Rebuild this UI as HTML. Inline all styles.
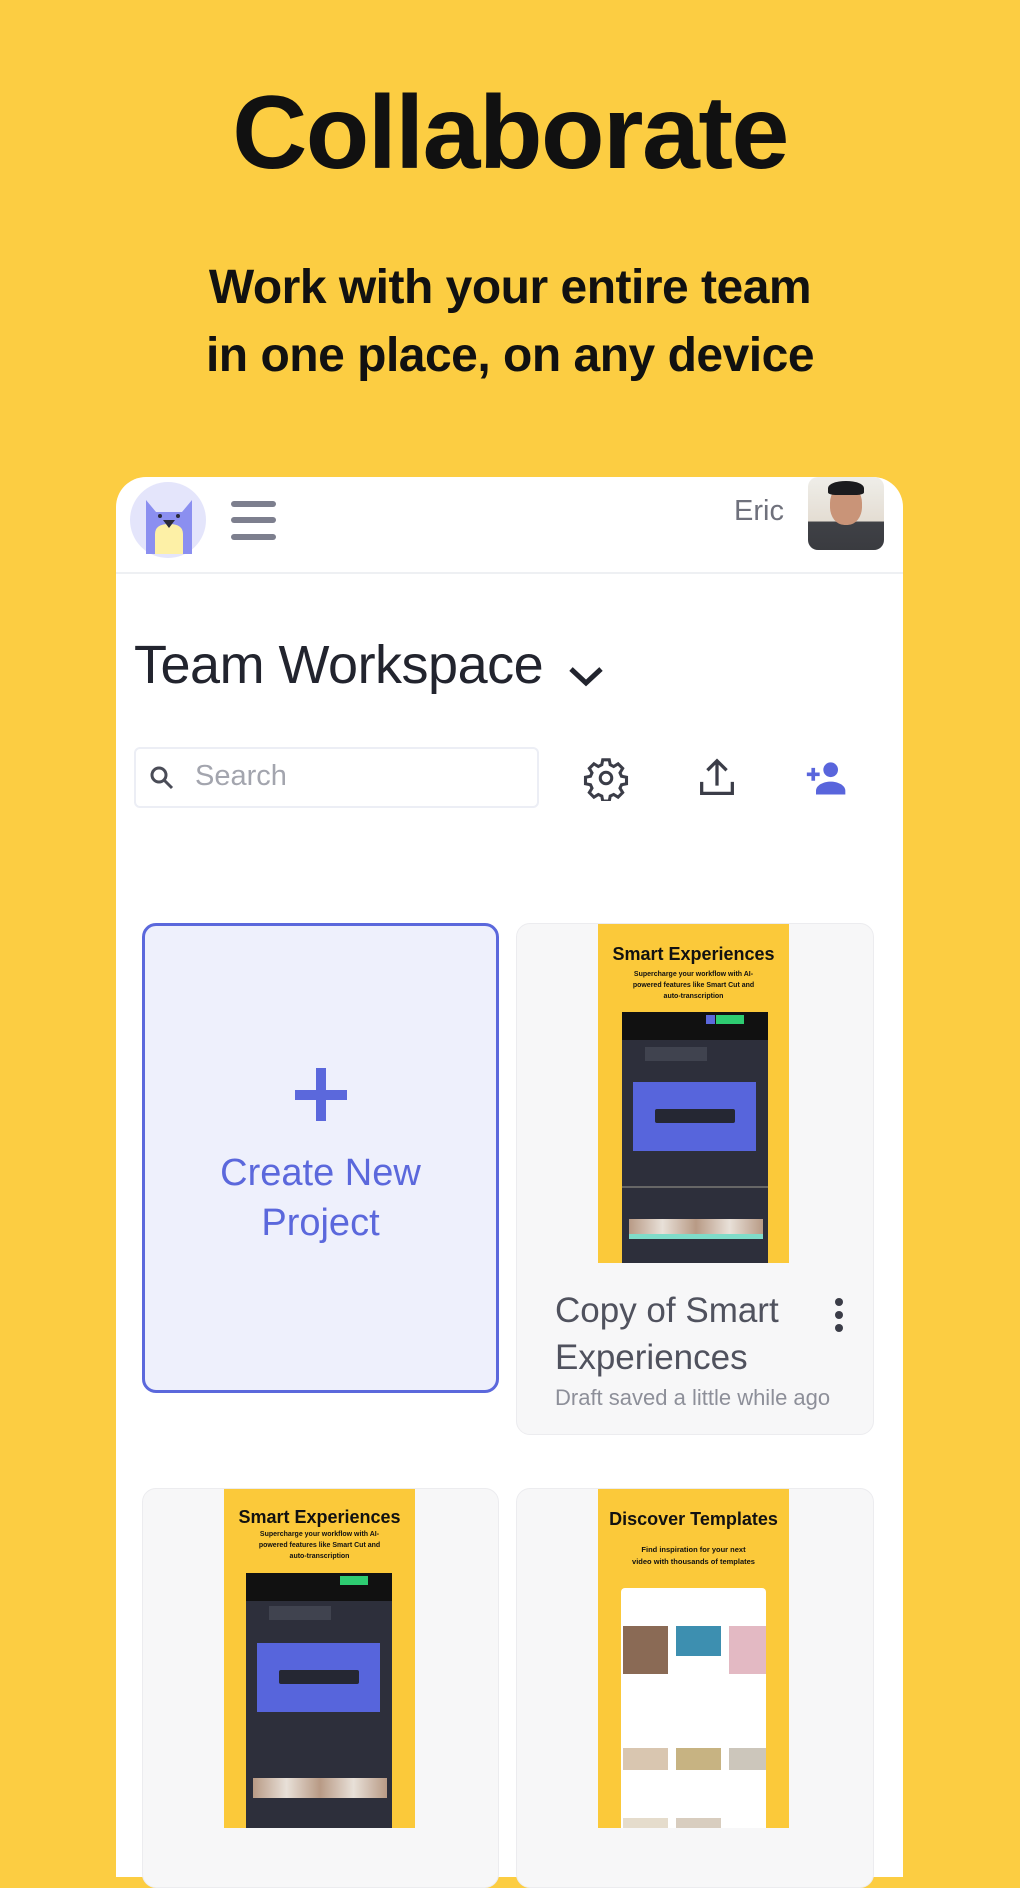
<!DOCTYPE html>
<html><head><meta charset="utf-8"><style>
*{margin:0;padding:0;box-sizing:border-box}
body{width:1020px;height:1813px;background:#fccd42;font-family:"Liberation Sans",sans-serif;position:relative;overflow:hidden}
.abs{position:absolute}
h1{position:absolute;left:0;width:1020px;text-align:center;top:78px;font-size:104px;font-weight:bold;color:#111;letter-spacing:-1.5px;line-height:110px}
.sub{position:absolute;left:0;width:1020px;text-align:center;top:254px;font-size:48px;font-weight:bold;color:#111;line-height:68px;letter-spacing:-0.5px}
.card{position:absolute;left:116px;top:477px;width:787px;height:1400px;background:#fff;border-radius:30px 30px 0 0}
.thumb{position:absolute;width:191px;height:339px;background:#fbc93a;overflow:hidden}
.thumb .t{position:absolute;left:0;width:191px;text-align:center;font-weight:bold;color:#111}
</style></head><body>
<h1>Collaborate</h1>
<div class="sub">Work with your entire team<br>in one place, on any device</div>
<div class="card"></div>
<div class="abs" style="left:116px;top:572px;width:787px;height:2px;background:#eef0f3"></div>
<svg class="abs" style="left:130px;top:482px" width="78" height="78" viewBox="0 0 78 78">
<circle cx="38" cy="38" r="38" fill="#e4e5fb"/>
<path d="M16 72 L16 18 L26 30 L52 30 L62 18 L62 72 Z" fill="#8b8ff0"/>
<path d="M25 72 L25 52 Q25 42 39 42 Q53 42 53 52 L53 72 Z" fill="#fdf0a6"/>
<path d="M33 38 L45 38 L39 46 Z" fill="#2b2b3a"/>
<circle cx="30" cy="34" r="2" fill="#2b2b3a"/><circle cx="48" cy="34" r="2" fill="#2b2b3a"/>
</svg>
<div class="abs" style="left:231px;top:501px;width:45px;height:6px;border-radius:3px;background:#7d7f8e"></div>
<div class="abs" style="left:231px;top:517px;width:45px;height:6px;border-radius:3px;background:#7d7f8e"></div>
<div class="abs" style="left:231px;top:534px;width:45px;height:6px;border-radius:3px;background:#7d7f8e"></div>
<div class="abs" style="left:734px;top:495px;font-size:29px;color:#6f717c">Eric</div>
<div class="abs" style="left:808px;top:477px;width:76px;height:73px;border-radius:10px;background:linear-gradient(#efeee9 0,#e4ddd3 60%,#3f4146 62%,#3a3b40 100%);overflow:hidden">
<div class="abs" style="left:22px;top:8px;width:32px;height:40px;border-radius:45%;background:#c99478"></div>
<div class="abs" style="left:20px;top:4px;width:36px;height:14px;border-radius:50% 50% 20% 20%;background:#1b1b1e"></div>
</div>
<div class="abs" style="left:134px;top:634px;font-size:54px;color:#22242e;letter-spacing:-0.5px">Team Workspace</div>
<svg class="abs" style="left:567px;top:664px" width="38" height="24"><path d="M4 5 L19 19 L34 5" fill="none" stroke="#22242e" stroke-width="5"/></svg>
<div class="abs" style="left:134px;top:747px;width:405px;height:61px;border:2px solid #eceef5;border-radius:6px"></div>
<svg class="abs" style="left:148px;top:764px" width="28" height="28"><circle cx="11" cy="11" r="7" fill="none" stroke="#4a4c57" stroke-width="3"/><path d="M16 16 L24 24" stroke="#4a4c57" stroke-width="3"/></svg>
<div class="abs" style="left:195px;top:760px;font-size:29px;color:#a3a5ae">Search</div>
<svg class="abs" style="left:583px;top:755px" width="46" height="46" viewBox="0 0 24 24"><path fill="none" stroke="#3b3d48" stroke-width="1.6" d="M10.3 2.5h3.4l.5 2.6 1.8.9 2.3-1.4 2.4 2.4-1.4 2.3.8 1.8 2.6.5v3.4l-2.6.5-.8 1.8 1.4 2.3-2.4 2.4-2.3-1.4-1.8.8-.5 2.6h-3.4l-.5-2.6-1.8-.8-2.3 1.4-2.4-2.4 1.4-2.3-.8-1.8-2.6-.5v-3.4l2.6-.5.8-1.8-1.4-2.3 2.4-2.4 2.3 1.4 1.8-.9z"/><circle cx="12" cy="12" r="3" fill="none" stroke="#3b3d48" stroke-width="1.6"/></svg>
<svg class="abs" style="left:694px;top:755px" width="46" height="46" viewBox="0 0 24 24"><path fill="none" stroke="#3b3d48" stroke-width="1.7" d="M4 14v6h16v-6M12 16V3M7 8l5-5 5 5"/></svg>
<svg class="abs" style="left:804px;top:756px" width="46" height="44" viewBox="0 0 24 24"><circle cx="14" cy="7.5" r="4" fill="#5965dc"/><path d="M6 21v-2c0-3 4-5 8-5s8 2 8 5v2z" fill="#5965dc"/><path d="M1 10h7M4.5 6.5v7" stroke="#5965dc" stroke-width="2"/></svg>
<div class="abs" style="left:142px;top:923px;width:357px;height:470px;background:#eef0fc;border:3px solid #5b68dc;border-radius:14px"></div>
<div class="abs" style="left:295px;top:1090px;width:52px;height:10px;background:#5b68dc"></div>
<div class="abs" style="left:316px;top:1068px;width:10px;height:53px;background:#5b68dc"></div>
<div class="abs" style="left:142px;top:1148px;width:357px;text-align:center;font-size:38px;line-height:50px;color:#5b68dc">Create New<br>Project</div>
<div class="abs" style="left:516px;top:923px;width:358px;height:512px;background:#f7f7f8;border:1px solid #ececef;border-radius:14px"></div>
<div class="thumb" style="left:598px;top:924px">
 <div class="t" style="top:20px;font-size:18px">Smart Experiences</div>
 <div class="t" style="top:45px;font-size:7px;line-height:11px">Supercharge your workflow with AI-<br>powered features like Smart Cut and<br>auto-transcription</div>
 <div class="abs" style="left:24px;top:88px;width:146px;height:260px;background:#2d2f3b">
  <div class="abs" style="left:0;top:0;width:146px;height:28px;background:#111"></div>
  <div class="abs" style="left:94px;top:3px;width:28px;height:9px;background:#2ecc71"></div>
  <div class="abs" style="left:84px;top:3px;width:9px;height:9px;background:#5b68dc"></div>
  <div class="abs" style="left:23px;top:35px;width:62px;height:14px;background:#40434f"></div>
  <div class="abs" style="left:11px;top:70px;width:123px;height:69px;background:#5765dc"></div>
  <div class="abs" style="left:33px;top:97px;width:80px;height:14px;background:#252733;border-radius:2px"></div>
  <div class="abs" style="left:0;top:174px;width:146px;height:2px;background:#666"></div>
  <div class="abs" style="left:7px;top:207px;width:134px;height:20px;background:linear-gradient(90deg,#b89a85,#e8e0d8,#b89a85,#e8e0d8,#b89a85)"></div>
  <div class="abs" style="left:7px;top:222px;width:134px;height:5px;background:#7fdcc9"></div>
 </div>
</div>
<div class="abs" style="left:555px;top:1287px;font-size:35px;line-height:47px;color:#50525e">Copy of Smart<br>Experiences</div>
<div class="abs" style="left:555px;top:1385px;font-size:22px;color:#8d8f99">Draft saved a little while ago</div>
<div class="abs" style="left:835px;top:1298px;width:8px;height:8px;border-radius:50%;background:#3b3d48"></div>
<div class="abs" style="left:835px;top:1311px;width:8px;height:8px;border-radius:50%;background:#3b3d48"></div>
<div class="abs" style="left:835px;top:1324px;width:8px;height:8px;border-radius:50%;background:#3b3d48"></div>
<div class="abs" style="left:142px;top:1488px;width:357px;height:400px;background:#f7f7f8;border:1px solid #ececef;border-radius:14px"></div>
<div class="abs" style="left:516px;top:1488px;width:358px;height:400px;background:#f7f7f8;border:1px solid #ececef;border-radius:14px"></div>
<div class="thumb" style="left:224px;top:1489px">
 <div class="t" style="top:18px;font-size:18px">Smart Experiences</div>
 <div class="t" style="top:40px;font-size:7px;line-height:11px">Supercharge your workflow with AI-<br>powered features like Smart Cut and<br>auto-transcription</div>
 <div class="abs" style="left:22px;top:84px;width:146px;height:260px;background:#2d2f3b">
  <div class="abs" style="left:0;top:0;width:146px;height:28px;background:#111"></div>
  <div class="abs" style="left:94px;top:3px;width:28px;height:9px;background:#2ecc71"></div>
  <div class="abs" style="left:23px;top:33px;width:62px;height:14px;background:#40434f"></div>
  <div class="abs" style="left:11px;top:70px;width:123px;height:69px;background:#5765dc"></div>
  <div class="abs" style="left:33px;top:97px;width:80px;height:14px;background:#252733;border-radius:2px"></div>
  <div class="abs" style="left:7px;top:205px;width:134px;height:20px;background:linear-gradient(90deg,#b89a85,#e8e0d8,#b89a85,#e8e0d8,#b89a85)"></div>
 </div>
</div>
<div class="thumb" style="left:598px;top:1489px">
 <div class="t" style="top:20px;font-size:18px">Discover Templates</div>
 <div class="t" style="top:55px;font-size:7.5px;line-height:12px">Find inspiration for your next<br>video with thousands of templates</div>
 <div class="abs" style="left:23px;top:99px;width:145px;height:260px;background:#fff;border-radius:4px">
  <div class="abs" style="left:2px;top:38px;width:45px;height:48px;background:#8a6a55"></div>
  <div class="abs" style="left:55px;top:38px;width:45px;height:30px;background:#3d8fb0"></div>
  <div class="abs" style="left:108px;top:38px;width:37px;height:48px;background:#e3b9c3"></div>
  <div class="abs" style="left:2px;top:160px;width:45px;height:22px;background:#d9c6b0"></div>
  <div class="abs" style="left:55px;top:160px;width:45px;height:22px;background:#c7b382"></div>
  <div class="abs" style="left:108px;top:160px;width:37px;height:22px;background:#ccc6bb"></div>
  <div class="abs" style="left:2px;top:230px;width:45px;height:30px;background:#e5dccc"></div>
  <div class="abs" style="left:55px;top:230px;width:45px;height:30px;background:#d8cdbf"></div>
 </div>
</div>
</body></html>
